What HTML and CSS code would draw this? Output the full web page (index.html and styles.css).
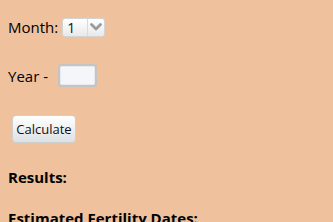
FILE: index.html
```html
<!DOCTYPE html>
<html lang="en">
<head>
    <meta charset="UTF-8">
    <meta name="viewport" content="width=device-width, initial-scale=1.0">
    <title>Fertility Calculator</title>
    <link rel="stylesheet" href="styles.css">
</head>
<body>
    <div class="page">
        <div class="row month-row">
            <label for="month">Month:</label>
            <div class="select-box">
                <select id="month">
                    <option>1</option>
                    <option>2</option>
                    <option>3</option>
                    <option>4</option>
                    <option>5</option>
                    <option>6</option>
                    <option>7</option>
                    <option>8</option>
                    <option>9</option>
                    <option>10</option>
                    <option>11</option>
                    <option>12</option>
                </select>
                <span class="select-arrow">
                    <svg width="12" height="8" viewBox="0 0 12 8">
                        <path d="M1.5 1.5 L6 6 L10.5 1.5" fill="none" stroke="#9a9a9a" stroke-width="2.8" stroke-linecap="round" stroke-linejoin="round"/>
                    </svg>
                </span>
            </div>
        </div>

        <div class="row year-row">
            <label for="year">Year -</label>
            <input type="text" id="year" class="year-input">
        </div>

        <button class="btn" onclick="calculate()">Calculate</button>

        <h3 class="heading results">Results:</h3>
        <h3 class="heading">Estimated Fertility Dates:</h3>
        <div id="output"></div>
    </div>

    <script>
        function calculate() {
            var month = parseInt(document.getElementById('month').value, 10);
            var year = parseInt(document.getElementById('year').value, 10);
            if (isNaN(year)) {
                return;
            }
            var start = new Date(year, month - 1, 10);
            var end = new Date(year, month - 1, 17);
            document.getElementById('output').textContent =
                start.toDateString() + ' - ' + end.toDateString();
        }
    </script>
</body>
</html>
```

FILE: styles.css
```css
body {
    margin: 0;
    background: #efc19d;
    font-family: 'Open Sans', 'Noto Sans', sans-serif;
    font-size: 15px;
    color: #000;
}

.page {
    padding: 16px 8px 0 8px;
}

.row {
    display: flex;
    align-items: center;
}

.month-row {
    height: 22px;
}

.month-row label {
    margin-right: 4px;
}

.select-box {
    display: flex;
    align-items: stretch;
    width: 41px;
    height: 17px;
    border: 1px solid #d4d4d4;
    border-radius: 3px;
    background: linear-gradient(#ffffff, #e9e9e9);
}

.select-box select {
    -webkit-appearance: none;
    appearance: none;
    width: 24px;
    border: none;
    background: transparent;
    font-family: 'Open Sans', sans-serif;
    font-size: 14px;
    padding: 0 0 0 4px;
    margin: 0;
    color: #111;
    line-height: 17px;
}

.select-arrow {
    flex: 1;
    display: flex;
    align-items: center;
    justify-content: center;
    border-left: 1px solid #dadada;
}

.year-row {
    margin-top: 26px;
    height: 23px;
}

.year-row label {
    margin-right: 10px;
}

.year-input {
    width: 35px;
    height: 19px;
    padding: 0;
    border: 2px solid #c4c4c4;
    border-radius: 3px;
    background: #f5f6fa;
    box-shadow: inset 0 0 1px #888;
    outline: none;
}

.btn {
    display: block;
    margin: 28px 0 0 4px;
    width: 64px;
    height: 28px;
    padding: 0;
    border: 1px solid #cfcfcf;
    border-radius: 4px;
    background: linear-gradient(#ffffff, #dde1e4);
    font-family: 'Open Sans', sans-serif;
    font-size: 13px;
    color: #111;
}

.heading {
    margin: 0;
    font-size: 15px;
    font-weight: bold;
    line-height: 22px;
}

.results {
    margin-top: 23px;
    margin-bottom: 19px;
}
```
